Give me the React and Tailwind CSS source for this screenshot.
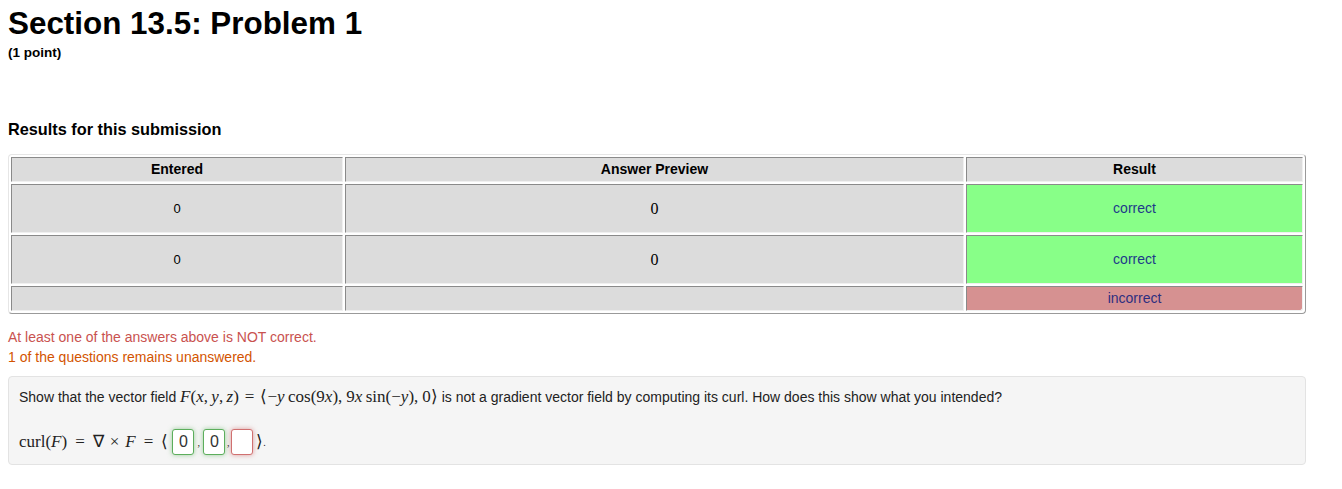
import React from "react";

function Cell({ children, className = "", h = "h-[49px]" }) {
  return (
    <td
      className={`border border-t-[#8a8a8a] border-l-[#8a8a8a] border-b-[#f0f0f0] border-r-[#f0f0f0] text-center align-middle p-0 ${h} ${className}`}
    >
      {children}
    </td>
  );
}

function Box({ val, ok }) {
  return (
    <span
      className={`inline-flex items-center justify-center w-[22px] h-[26px] align-middle rounded-[3px] bg-white border text-[16px] text-[#333] font-['Liberation_Sans',Arial,sans-serif] not-italic ${
        ok
          ? "border-[#5cae5c] shadow-[0_0_5px_rgba(80,170,80,0.55)]"
          : "border-[#d07070] shadow-[0_0_5px_rgba(200,80,80,0.55)]"
      }`}
    >
      {val}
    </span>
  );
}

export default function App() {
  const serif = "font-['Liberation_Serif','Times_New_Roman',serif]";
  return (
    <div className="px-[8px] pt-[5px] font-['Liberation_Sans',Arial,sans-serif] text-black bg-white min-h-[489px]">
      <h1 className="text-[31.4px] font-bold leading-[37px]">Section 13.5: Problem 1</h1>
      <div className="text-[13.5px] font-bold leading-[16px] mt-[3px]">(1 point)</div>

      <h2 className="text-[16.3px] font-bold leading-[18px] mt-[59px]">Results for this submission</h2>

      <table className="mt-[16px] w-[1298px] border-separate border-spacing-[2px] border border-t-[#e6e6e6] border-l-[#e6e6e6] border-b-[#9a9a9a] border-r-[#9a9a9a] rounded-[4px] text-[14px]">
        <thead>
          <tr>
            <Cell h="h-[25px]" className="bg-[#dcdcdc] font-bold w-[332px]">Entered</Cell>
            <Cell h="h-[25px]" className="bg-[#dcdcdc] font-bold w-[619px]">Answer Preview</Cell>
            <Cell h="h-[25px]" className="bg-[#dcdcdc] font-bold">Result</Cell>
          </tr>
        </thead>
        <tbody>
          {[0, 1].map((k) => (
            <tr key={k}>
              <Cell className="bg-[#dcdcdc] text-[13px]">0</Cell>
              <Cell className={`bg-[#dcdcdc] text-[16px] ${serif}`}>0</Cell>
              <Cell className="bg-[#88ff88] text-[14px] text-[#1e3a8a]">correct</Cell>
            </tr>
          ))}
          <tr>
            <Cell h="h-[25px]" className="bg-[#dcdcdc]"></Cell>
            <Cell h="h-[25px]" className="bg-[#dcdcdc]"></Cell>
            <Cell h="h-[25px]" className="bg-[#d69191] text-[14px] text-[#2e2e80] rounded-br-[3px]">incorrect</Cell>
          </tr>
        </tbody>
      </table>

      <div className="mt-[13px] text-[14px] leading-[20px]">
        <div className="text-[#c9524f]">At least one of the answers above is NOT correct.</div>
        <div className="text-[#d35400]">1 of the questions remains unanswered.</div>
      </div>

      <div className="mt-[9px] w-[1298px] h-[89px] bg-[#f5f5f5] border border-[#e3e3e3] rounded-[4px] px-[10px] pt-[10px] text-[14px] text-[#222]">
        <div className="leading-[20px]">
          Show that the vector field{" "}
          <span className={`${serif} text-[17px]`}>
            <i>F</i>(<i>x</i>,&thinsp;<i>y</i>,&thinsp;<i>z</i>)
            <span className="mx-[6px]">=</span>⟨−<i>y</i>&thinsp;cos(9<i>x</i>),<span className="ml-[4px]"></span>9<i>x</i>&thinsp;sin(−<i>y</i>),<span className="ml-[4px]"></span>0⟩
          </span>{" "}
          is not a gradient vector field by computing its curl. How does this show what you intended?
        </div>
        <div className={`mt-[22px] flex items-center ${serif} text-[17px] text-[#222]`}>
          <span>
            curl(<i>F</i>)<span className="mx-[8px]">=</span>∇<span className="mx-[6px]">×</span><i>F</i>
            <span className="mx-[8px]">=</span>⟨
          </span>
          <span className="ml-[4px]"></span>
          <Box val="0" ok />
          <span className="text-[10px] w-[9px] text-center">,</span>
          <Box val="0" ok />
          <span className="text-[10px] w-[6px] text-center">,</span>
          <Box val="" ok={false} />
          <span className="ml-[3px]">⟩</span>
          <span className="text-[10px]">.</span>
        </div>
      </div>
    </div>
  );
}
